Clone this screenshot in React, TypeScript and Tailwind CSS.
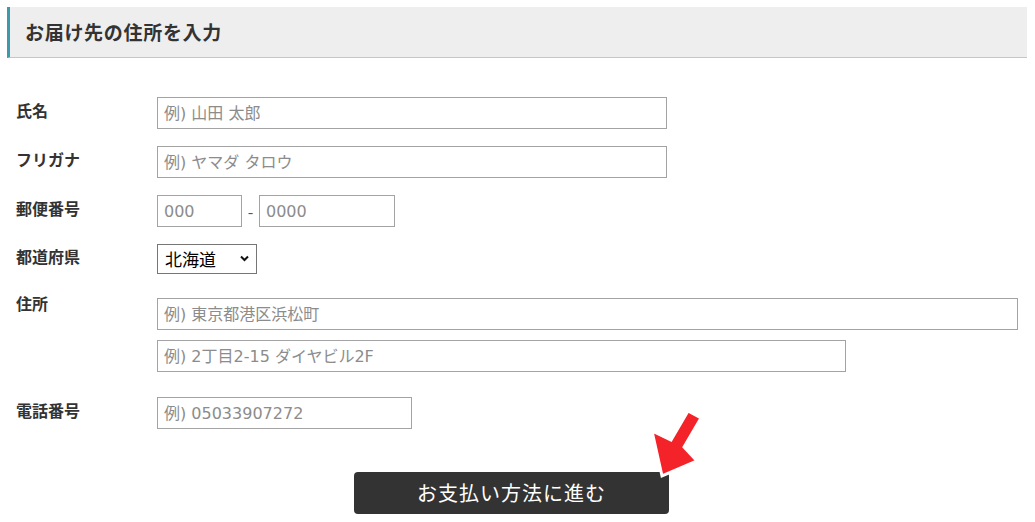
import React from "react";

const Label = ({ children, className = "" }: { children: React.ReactNode; className?: string }) => (
    <div className={`w-[141px] shrink-0 text-[16px] font-bold leading-[20px] text-[#333] ${className}`}>
        {children}
    </div>
);

const TextInput = ({ placeholder, className = "" }: { placeholder: string; className?: string }) => (
    <input
        type="text"
        placeholder={placeholder}
        className={`h-[32px] border border-[#a3a3a3] bg-white px-[6px] font-['DejaVu_Sans','Noto_Sans_CJK_JP',sans-serif] text-[16px] text-[#333] outline-none placeholder:text-[#8c8c8c] ${className}`}
    />
);

const App: React.FC = () => {
    return (
        <div className="relative h-[522px] w-[1035px] overflow-hidden bg-white font-['Noto_Sans_CJK_JP','Noto_Sans',sans-serif] text-[#333]">
            {/* heading */}
            <div className="ml-[7px] mr-[8px] mt-[7px] flex h-[51px] items-center border-b border-l-[3px] border-b-[#c6c6c6] border-l-[#3b9aab] bg-[#eeeeee] pl-[15px]">
                <h2 className="text-[19px] font-bold tracking-[0.7px] text-[#333]">お届け先の住所を入力</h2>
            </div>

            <div className="flex flex-col pl-[16px] pt-[39px]">
                <div className="flex items-start">
                    <Label className="pt-[3px]">氏名</Label>
                    <TextInput placeholder="例) 山田 太郎" className="w-[510px]" />
                </div>

                <div className="mt-[17px] flex items-start">
                    <Label className="pt-[3px]">フリガナ</Label>
                    <TextInput placeholder="例) ヤマダ タロウ" className="w-[510px]" />
                </div>

                <div className="mt-[17px] flex items-start">
                    <Label className="pt-[3px]">郵便番号</Label>
                    <TextInput placeholder="000" className="w-[85px]" />
                    <span className="w-[17px] text-center text-[16px] leading-[32px] text-[#555]">-</span>
                    <TextInput placeholder="0000" className="w-[136px]" />
                </div>

                <div className="mt-[17px] flex items-start">
                    <Label className="pt-[2px]">都道府県</Label>
                    <div className="relative">
                        <select className="h-[30px] w-[100px] appearance-none border border-[#767676] bg-white pl-[7px] text-[17px] text-black outline-none">
                            <option>北海道</option>
                        </select>
                        <svg
                            className="pointer-events-none absolute right-[8px] top-[11px]"
                            width="9"
                            height="7"
                            viewBox="0 0 9 7"
                        >
                            <path d="M1 1.5 L4.5 5 L8 1.5" fill="none" stroke="#111" strokeWidth="2" />
                        </svg>
                    </div>
                </div>

                <div className="mt-[24px] flex items-start">
                    <Label className="-mt-[5px]">住所</Label>
                    <div className="flex flex-col">
                        <TextInput placeholder="例) 東京都港区浜松町" className="w-[861px]" />
                        <TextInput placeholder="例) 2丁目2-15 ダイヤビル2F" className="mt-[10px] w-[689px]" />
                    </div>
                </div>

                <div className="mt-[25px] flex items-start">
                    <Label className="pt-[3px]">電話番号</Label>
                    <TextInput placeholder="例) 05033907272" className="w-[255px]" />
                </div>

                <div className="mt-[43px] ml-[338px]">
                    <button className="h-[42px] w-[315px] rounded-[4px] bg-[#333333] text-[20px] tracking-[1px] text-white">
                        お支払い方法に進む
                    </button>
                </div>
            </div>

            {/* red pointer arrow */}
            <svg
                className="pointer-events-none absolute left-[640px] top-[400px]"
                width="80"
                height="85"
                viewBox="0 0 80 85"
            >
                <polygon
                    points="48,11 61,18 44,47 57,61 22,76 12,31 31,40"
                    fill="#f4232a"
                    stroke="#ffffff"
                    strokeWidth="3"
                    strokeLinejoin="miter"
                />
            </svg>
        </div>
    );
};

export default App;
